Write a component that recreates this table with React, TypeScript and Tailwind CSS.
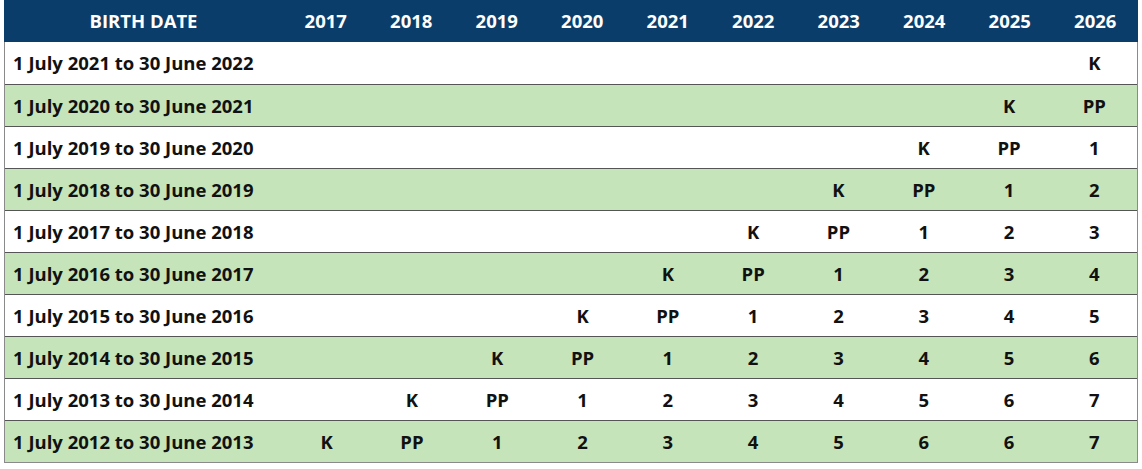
const years = ["2017", "2018", "2019", "2020", "2021", "2022", "2023", "2024", "2025", "2026"];

const rows: { label: string; cells: string[] }[] = [
  { label: "1 July 2021 to 30 June 2022", cells: ["", "", "", "", "", "", "", "", "", "K"] },
  { label: "1 July 2020 to 30 June 2021", cells: ["", "", "", "", "", "", "", "", "K", "PP"] },
  { label: "1 July 2019 to 30 June 2020", cells: ["", "", "", "", "", "", "", "K", "PP", "1"] },
  { label: "1 July 2018 to 30 June 2019", cells: ["", "", "", "", "", "", "K", "PP", "1", "2"] },
  { label: "1 July 2017 to 30 June 2018", cells: ["", "", "", "", "", "K", "PP", "1", "2", "3"] },
  { label: "1 July 2016 to 30 June 2017", cells: ["", "", "", "", "K", "PP", "1", "2", "3", "4"] },
  { label: "1 July 2015 to 30 June 2016", cells: ["", "", "", "K", "PP", "1", "2", "3", "4", "5"] },
  { label: "1 July 2014 to 30 June 2015", cells: ["", "", "K", "PP", "1", "2", "3", "4", "5", "6"] },
  { label: "1 July 2013 to 30 June 2014", cells: ["", "K", "PP", "1", "2", "3", "4", "5", "6", "7"] },
  { label: "1 July 2012 to 30 June 2013", cells: ["K", "PP", "1", "2", "3", "4", "5", "6", "6", "7"] },
];

export default function App() {
  return (
    <div className="w-[1142px] h-[469px] bg-white pl-[4px] font-['Open_Sans',sans-serif]">
      <div className="w-[1134px] border-x border-b border-[#8a8a8a]">
        {/* Header */}
        <div className="grid grid-cols-[279px_repeat(10,1fr)] h-[42px] bg-[#0b3d6b] text-white font-bold text-[18.5px] items-center -mx-px">
          <div className="text-center">BIRTH DATE</div>
          {years.map((y) => (
            <div key={y} className="text-center">{y}</div>
          ))}
        </div>

        {/* Rows */}
        {rows.map((r, i) => (
          <div
            key={r.label}
            className={`grid grid-cols-[279px_repeat(10,1fr)] items-center font-bold text-[18.5px] text-[#111] ${
              i > 0 ? "border-t border-[#555] h-[42px]" : "h-[42px]"
            } ${i % 2 === 1 ? "bg-[#c6e4b9]" : "bg-white"}`}
          >
            <div className="pl-[8px]">{r.label}</div>
            {r.cells.map((c, j) => (
              <div key={j} className="text-center">{c}</div>
            ))}
          </div>
        ))}
      </div>
    </div>
  );
}
